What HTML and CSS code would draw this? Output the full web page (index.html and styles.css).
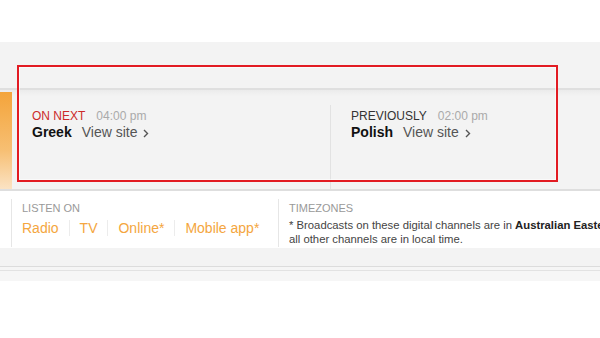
FILE: index.html
```html
<!DOCTYPE html>
<html>
<head>
<meta charset="utf-8">
<link rel="stylesheet" href="styles.css">
</head>
<body>
<div class="band">
  <div class="band-top"></div>
  <div class="schedule">
    <div class="accent"></div>
    <div class="slot slot-next">
      <div class="slot-head"><span class="label label-next">On next</span><span class="time">04:00 pm</span></div>
      <div class="slot-body"><span class="lang">Greek</span><a class="view">View site<svg class="chev" width="6" height="9" viewBox="0 0 6 9"><path d="M1 1 L4.5 4.5 L1 8" fill="none" stroke="#555" stroke-width="1.4"/></svg></a></div>
    </div>
    <div class="slot slot-prev">
      <div class="slot-head"><span class="label">Previously</span><span class="time">02:00 pm</span></div>
      <div class="slot-body"><span class="lang">Polish</span><a class="view">View site<svg class="chev" width="6" height="9" viewBox="0 0 6 9"><path d="M1 1 L4.5 4.5 L1 8" fill="none" stroke="#555" stroke-width="1.4"/></svg></a></div>
    </div>
  </div>
</div>
<div class="info">
  <div class="block listen">
    <div class="heading">Listen on</div>
    <div class="links"><a>Radio</a><a>TV</a><a>Online*</a><a>Mobile app*</a></div>
  </div>
  <div class="block zones">
    <div class="heading">Timezones</div>
    <p class="note">* Broadcasts on these digital channels are in <b>Australian Eastern Standard Time</b>,<br>all other channels are in local time.</p>
  </div>
</div>
<div class="bottom-band"></div>
<div class="highlight"></div>
</body>
</html>
```
FILE: styles.css
```css
html, body {
  margin: 0;
  padding: 0;
  background: #fff;
  font-family: "Liberation Sans", Arial, sans-serif;
  overflow: hidden;
  width: 600px;
  height: 338px;
}
.band {
  margin-top: 42px;
  background: #f3f3f3;
  border-bottom: 2px solid #dedede;
}
.band-top {
  height: 46px;
  border-bottom: 2px solid #dfdfdf;
}
.schedule {
  display: flex;
  height: 99px;
  background: linear-gradient(#ebebeb, #f3f3f3 6px);
}
.accent {
  width: 12px;
  margin-top: 2px;
  background: linear-gradient(#f4a43a, #f7bf73 60%, #fbe3c4);
}
.slot {
  padding-top: 19px;
}
.slot-next {
  width: 298px;
  padding-left: 20px;
}
.slot-prev {
  margin-top: 15px;
  padding-top: 4px;
  padding-left: 20px;
  border-left: 1px solid #e2e2e2;
}
.slot-head {
  font-size: 12px;
  line-height: 14px;
  text-transform: uppercase;
  color: #333;
}
.label-next {
  color: #cc2a2a;
}
.time {
  margin-left: 11px;
  color: #aaa;
  text-transform: none;
}
.slot-body {
  font-size: 14px;
  line-height: 18px;
  margin-top: 0;
}
.lang {
  font-weight: bold;
  color: #111;
  margin-right: 10px;
}
.view {
  color: #555;
}
.chev {
  margin-left: 6px;
  vertical-align: -1px;
}
.info {
  display: flex;
  height: 57px;
  padding-top: 8px;
  padding-left: 11px;
  box-sizing: border-box;
  overflow: hidden;
}
.block {
  border-left: 1px solid #e6e6e6;
  padding-left: 10px;
  height: 48px;
}
.listen {
  flex: none;
  width: 256px;
}
.zones {
  flex: 1;
  min-width: 0;
}
.heading {
  font-size: 11px;
  line-height: 14px;
  text-transform: uppercase;
  color: #999;
  margin-top: 2px;
}
.links {
  display: flex;
  margin-top: 5px;
  font-size: 14px;
  line-height: 16px;
  white-space: nowrap;
}
.links a {
  color: #f4a640;
  padding: 0 10px;
  border-left: 1px solid #ececec;
}
.links a:first-child {
  padding-left: 0;
  border-left: 0;
}
.note {
  margin: 3px 0 0;
  font-size: 11.3px;
  line-height: 14px;
  color: #444;
  white-space: nowrap;
}
.note b {
  color: #222;
}
.bottom-band {
  height: 33px;
  background: linear-gradient(#f3f3f3, #f3f3f3 18px, #dcdcdc 18px, #dcdcdc 19px, #f5f5f5 19px, #f5f5f5 22px, #e2e2e2 22px, #e2e2e2 23px, #f6f6f6 23px);
}
.highlight {
  position: absolute;
  left: 17px;
  top: 65px;
  width: 537px;
  height: 113px;
  border: 2px solid #e21b22;
  box-shadow: inset 0 0 0 1px rgba(255,255,255,0.6);
}
```
